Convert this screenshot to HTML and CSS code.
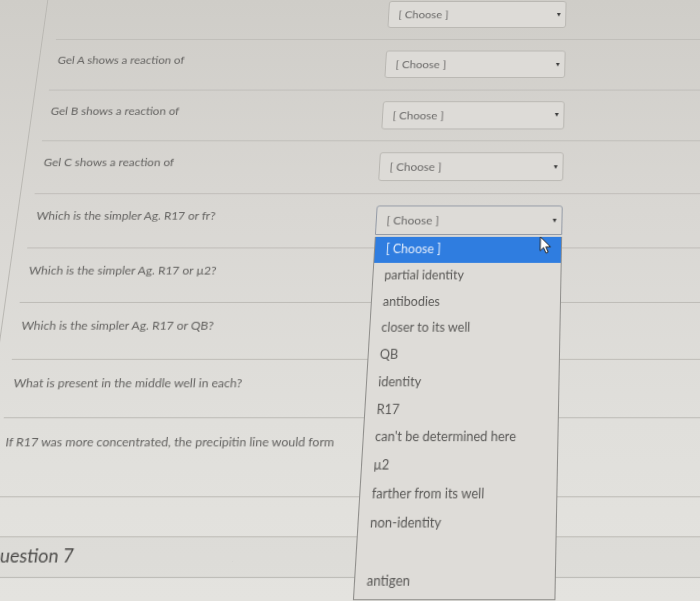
FILE: index.html
```html
<!DOCTYPE html>
<html lang="en">
<head>
<meta charset="utf-8">
<title>Quiz</title>
<link rel="stylesheet" href="styles.css">
</head>
<body>
<div class="sheet">
  <div class="quiz">
    <div class="row row-top">
      <div class="q"></div>
      <div class="a"><div class="select"><span>[ Choose ]</span><span class="caret"></span></div></div>
    </div>
    <div class="row">
      <div class="q">Gel A shows a reaction of</div>
      <div class="a"><div class="select"><span>[ Choose ]</span><span class="caret"></span></div></div>
    </div>
    <div class="row">
      <div class="q">Gel B shows a reaction of</div>
      <div class="a"><div class="select"><span>[ Choose ]</span><span class="caret"></span></div></div>
    </div>
    <div class="row">
      <div class="q">Gel C shows a reaction of</div>
      <div class="a"><div class="select"><span>[ Choose ]</span><span class="caret"></span></div></div>
    </div>
    <div class="row">
      <div class="q">Which is the simpler Ag. R17 or fr?</div>
      <div class="a">
        <div class="select select-open"><span>[ Choose ]</span><span class="caret"></span></div>
        <ul class="options">
          <li class="selected">[ Choose ]</li>
          <li>partial identity</li>
          <li>antibodies</li>
          <li>closer to its well</li>
          <li>QB</li>
          <li>identity</li>
          <li>R17</li>
          <li>can't be determined here</li>
          <li>µ2</li>
          <li>farther from its well</li>
          <li>non-identity</li>
          <li class="blank"></li>
          <li>antigen</li>
        </ul>
        <svg class="cursor" width="13" height="19" viewBox="0 0 13 19"><path d="M1 1 L1 15.5 L4.4 12.2 L7 17.9 L9.2 16.9 L6.7 11.4 L11.4 11.4 Z" fill="#fff" stroke="#222" stroke-width="1" stroke-linejoin="round"/></svg>
      </div>
    </div>
    <div class="row">
      <div class="q">Which is the simpler Ag. R17 or µ2?</div>
      <div class="a"></div>
    </div>
    <div class="row">
      <div class="q">Which is the simpler Ag. R17 or QB?</div>
      <div class="a"></div>
    </div>
    <div class="row">
      <div class="q">What is present in the middle well in each?</div>
      <div class="a"></div>
    </div>
    <div class="row row-tall">
      <div class="q">If R17 was more concentrated, the precipitin line would form</div>
      <div class="a"></div>
    </div>
    <div class="row row-blank"></div>
  </div>
  <div class="heading">Question 7</div>
  <div class="after"></div>
</div>
</body>
</html>
```

FILE: styles.css
```css
html, body {
  margin: 0;
  height: 100%;
  overflow: hidden;
}

body {
  background: linear-gradient(180deg, #cecca7 0%, #cfcdc8 0%, #d9d7d3 35%, #e0dfdb 70%, #e4e3df 100%);
  font-family: Lato, "Noto Sans", sans-serif;
}

.sheet {
  width: 730px;
  margin-top: -37px;
  transform-origin: 645px 337px;
  transform: perspective(800px) rotateX(10deg);
}

.quiz {
  margin-left: 5px;
  border-left: 1px solid #b9b7b2;
  padding-left: 14px;
}

.row {
  display: flex;
  box-sizing: border-box;
  height: 56.7px;
  border-bottom: 1px solid #bebcb7;
}

.row-top { height: 57px; }
.row-tall { height: 75px; }
.row-blank { height: 37px; }

.q {
  flex: none;
  width: 351px;
  box-sizing: border-box;
  padding: 16px 0 0 5px;
  font-size: 12px;
  line-height: 14px;
  color: #636260;
}

.a {
  position: relative;
  padding-top: 12px;
}

.select {
  box-sizing: border-box;
  width: 190px;
  height: 31px;
  border: 1px solid #b8b6b1;
  border-radius: 3px;
  background: #dddbd7;
  display: flex;
  align-items: center;
  justify-content: space-between;
  padding: 0 5px 0 10px;
  font-size: 12px;
  color: #6b6a69;
}

.select-open {
  border-color: #939aa6;
  border-bottom-left-radius: 0;
  border-bottom-right-radius: 0;
}

.caret {
  width: 0;
  height: 0;
  border-left: 2.5px solid transparent;
  border-right: 2.5px solid transparent;
  border-top: 4px solid #3a3a3a;
}

.options {
  position: absolute;
  left: 0;
  top: 45px;
  width: 190px;
  box-sizing: border-box;
  margin: 0;
  padding: 0 0 2px;
  list-style: none;
  background: #dedcd8;
  border: 1px solid #8f8e8b;
  border-top: none;
  font-size: 12.5px;
  color: #5a5957;
}

.options li {
  height: 26.75px;
  line-height: 26.75px;
  padding-left: 11px;
}

.options li.selected {
  background: #2f7de0;
  color: #e6eefb;
}

.cursor {
  position: absolute;
  left: 167px;
  top: 44px;
}

.heading {
  box-sizing: border-box;
  height: 37.3px;
  margin-left: 20px;
  padding: 6px 0 0 1px;
  font-size: 17px;
  line-height: 21px;
  color: #4a4947;
  background: rgba(0, 0, 0, 0.025);
  border-bottom: 1px solid #bebcb7;
}

.after {
  height: 80px;
}
```
